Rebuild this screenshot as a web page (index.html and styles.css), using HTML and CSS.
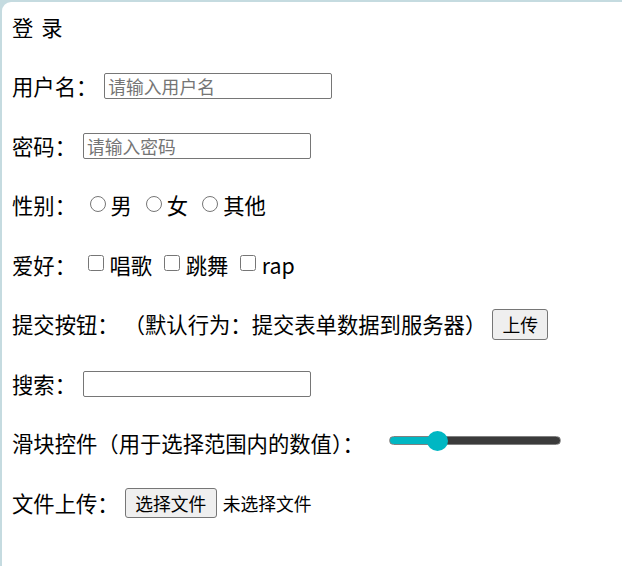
FILE: index.html
```html
<!DOCTYPE html>
<html lang="zh-CN">
<head>
<meta charset="utf-8">
<title>登录</title>
<link rel="stylesheet" href="styles.css">
</head>
<body>
<div class="frame">
  <main class="page">
    <div class="row title">登<span class="sp"></span>录</div>
    <div class="row">
      <span class="label">用户名：</span>
      <input class="text-input" type="text" placeholder="请输入用户名">
    </div>
    <div class="row">
      <span class="label">密码：</span>
      <input class="text-input" type="password" placeholder="请输入密码">
    </div>
    <div class="row">
      <span class="label">性别：</span>
      <input class="radio first" type="radio" name="sex"><span>男</span>
      <input class="radio" type="radio" name="sex"><span>女</span>
      <input class="radio" type="radio" name="sex"><span>其他</span>
    </div>
    <div class="row">
      <span class="label">爱好：</span>
      <input class="check first" type="checkbox"><span>唱歌</span>
      <input class="check" type="checkbox"><span>跳舞</span>
      <input class="check" type="checkbox"><span>rap</span>
    </div>
    <div class="row">
      <span class="label">提交按钮：</span>
      <span class="note">（默认行为：提交表单数据到服务器）</span>
      <button class="btn submit" type="button">上传</button>
    </div>
    <div class="row">
      <span class="label">搜索：</span>
      <input class="text-input" type="search">
    </div>
    <div class="row">
      <span class="label">滑块控件（用于选择范围内的数值）：</span>
      <input class="range" type="range" min="0" max="100" value="25">
    </div>
    <div class="row">
      <span class="label">文件上传：</span>
      <button class="btn file" type="button">选择文件</button>
      <span class="file-status">未选择文件</span>
    </div>
  </main>
</div>
</body>
</html>
```
FILE: styles.css
```css
html, body {
  margin: 0;
  padding: 0;
  height: 100%;
}
body {
  background: #c5dbe0;
  font-family: "Noto Sans CJK SC", "Noto Sans", sans-serif;
  color: #000;
}
.frame {
  height: 100%;
  box-sizing: border-box;
  padding: 2px 0 0 2px;
}
.page {
  height: 100%;
  box-sizing: border-box;
  background: #fff;
  border-top-left-radius: 9px;
  padding: 9.5px 0 0 10px;
  display: flex;
  flex-direction: column;
  gap: 29.5px;
  font-size: 21.33px;
}
.row {
  height: 30px;
  display: flex;
  align-items: center;
  white-space: nowrap;
  line-height: 30px;
}
.title .sp {
  display: inline-block;
  width: 8px;
}
.text-input {
  box-sizing: border-box;
  width: 228px;
  height: 26px;
  margin: 0 0 0 7px;
  padding: 1px 3px;
  border: 1px solid #767676;
  border-radius: 2px;
  font-family: "Noto Sans CJK SC", "Noto Sans", sans-serif;
  font-size: 17.78px;
  line-height: 22px;
  color: #000;
  background: #fff;
  outline: none;
}
.text-input::placeholder {
  color: #757575;
}
.text-input::-webkit-search-cancel-button {
  display: none;
}
.radio, .check {
  width: 16px;
  height: 16px;
  margin: 0 5px 3px 14px;
}
.radio.first {
  margin-left: 13.5px;
}
.check {
  margin-left: 12px;
  margin-right: 5.5px;
}
.check.first {
  margin-left: 12px;
}
.note {
  margin-left: 5px;
}
.btn {
  box-sizing: border-box;
  font-family: "Noto Sans CJK SC", "Noto Sans", sans-serif;
  font-size: 17.78px;
  color: #000;
  background: #efefef;
  border: 1px solid #767676;
  border-radius: 3px;
  line-height: 24px;
  padding: 0 9px;
}
.submit {
  height: 31px;
  width: 56px;
  margin-left: 6px;
}
.file {
  height: 30px;
  width: 92px;
  margin-left: 6px;
}
.file-status {
  font-size: 17.78px;
  margin-left: 6px;
}
.range {
  -webkit-appearance: none;
  appearance: none;
  width: 172px;
  height: 22px;
  margin: 0 0 5px 25px;
  background: transparent;
}
.range::-webkit-slider-runnable-track {
  height: 9px;
  border-radius: 5px;
  box-sizing: border-box;
  border: 1px solid #808080;
  background: linear-gradient(to right, #00b7c3 0 28%, #3b3b3b 28% 100%);
}
.range::-webkit-slider-thumb {
  -webkit-appearance: none;
  appearance: none;
  width: 21px;
  height: 20px;
  border-radius: 50%;
  background: #00b7c3;
  border: none;
  margin-top: -6.5px;
}
```
